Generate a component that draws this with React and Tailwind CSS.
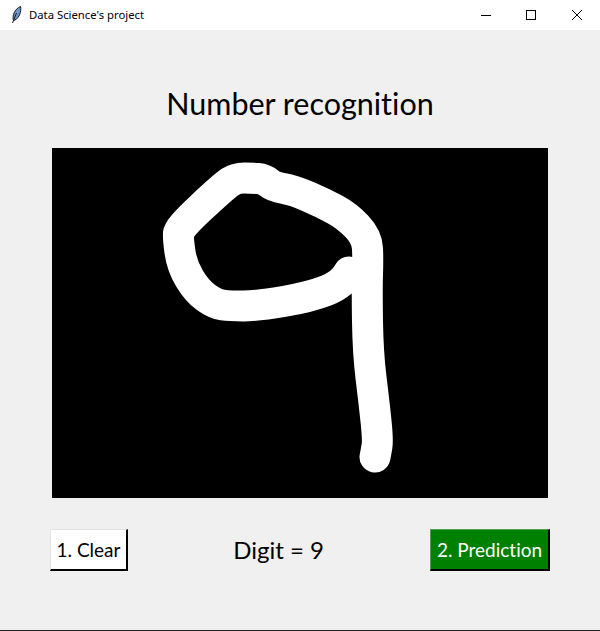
const fontStyle = "font-['Lato','Noto_Sans',sans-serif] [font-variant-ligatures:none]";

const strokePoints = [
  [297, 124], [291, 136], [258, 149], [205, 158], [178, 158], [163, 156], [145, 143], [130, 118],
  [126, 90], [127, 80], [172, 38], [184, 30], [200, 30], [212, 31], [222, 39], [241, 42], [271, 55],
  [295, 68], [315, 89], [316, 112], [315, 142], [316, 205], [322, 254], [326, 292], [324, 304], [323, 309],
];

// rounds the corners a bit by curving through the midpoints
const smoothPath = (points) => {
  let d = `M${points[0][0]} ${points[0][1]}`;
  for (let i = 1; i < points.length - 1; i++) {
    const [x, y] = points[i];
    const [nx, ny] = points[i + 1];
    d += `Q${x} ${y} ${(x + nx) / 2} ${(y + ny) / 2}`;
  }
  const last = points[points.length - 1];
  return `${d}L${last[0]} ${last[1]}`;
};

const Feather = () => (
  <svg width="16" height="20" viewBox="0 0 16 20" className="ml-[8px]">
    <path d="M5.5 15.5C4 11 6.5 4 12.5 1.5C13.5 6.5 11.5 12.5 7 15Z" fill="#6f95c8" stroke="#111827" strokeWidth="1" />
    <path d="M4.5 18L8.5 8" stroke="#111827" strokeWidth="1" fill="none" />
  </svg>
);

const WindowButtons = () => (
  <div className="flex h-full">
    <div className="flex h-full w-[45px] items-center justify-center">
      <svg width="12" height="12" viewBox="0 0 12 12"><path d="M1 6.5H11" stroke="#000" strokeWidth="1" /></svg>
    </div>
    <div className="flex h-full w-[46px] items-center justify-center">
      <svg width="12" height="12" viewBox="0 0 12 12"><rect x="1.5" y="1.5" width="9" height="9" fill="none" stroke="#000" strokeWidth="1" /></svg>
    </div>
    <div className="flex h-full w-[46px] items-center justify-center">
      <svg width="12" height="12" viewBox="0 0 12 12"><path d="M1 1L11 11M11 1L1 11" stroke="#000" strokeWidth="1" /></svg>
    </div>
  </div>
);

const DigitCanvas = () => (
  <div className="h-[350px] w-[496px] bg-black">
    <svg width="496" height="350" viewBox="0 0 496 350">
      <path
        d={smoothPath(strokePoints)}
        fill="none"
        stroke="#fff"
        strokeWidth="31"
        strokeLinecap="round"
        strokeLinejoin="round"
      />
    </svg>
  </div>
);

export default function App() {
  return (
    <div className={`flex h-[631px] w-[600px] flex-col overflow-hidden border-b border-[#222] bg-[#f0f0f0] text-black ${fontStyle}`}>
      <div className="flex h-[30px] shrink-0 items-center justify-between bg-white">
        <div className="flex items-center gap-[5px]">
          <Feather />
          <span className="font-['Noto_Sans',sans-serif] text-[11.3px] text-black">Data Science's project</span>
        </div>
        <WindowButtons />
      </div>

      <div className="flex flex-1 flex-col items-center">
        <h1 className="mt-[51px] h-[67px] text-[30.5px] leading-[44px] font-normal">Number recognition</h1>
        <DigitCanvas />
        <div className="mt-[31px] flex w-[500px] items-center justify-between">
          <button className="h-[42px] w-[78px] border border-[#e3e3e3] border-r-2 border-b-2 border-r-black border-b-black bg-white pt-[2px] text-[19px]">
            1. Clear
          </button>
          <span className="-ml-[1px] text-[24px]">Digit = 9</span>
          <button className="h-[42px] w-[120px] border border-[#4fa34f] border-r-2 border-b-2 border-r-black border-b-black bg-[#008000] pt-[2px] text-[19px] text-white">
            2. Prediction
          </button>
        </div>
      </div>
    </div>
  );
}
